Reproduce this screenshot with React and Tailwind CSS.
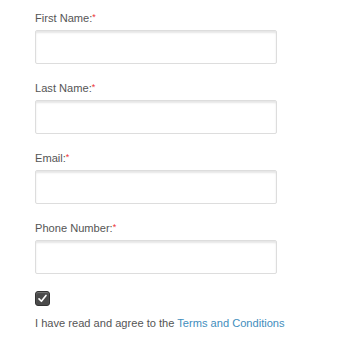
const FIELDS = ['First Name:', 'Last Name:', 'Email:', 'Phone Number:']

function Field({ label }) {
  return (
    <div className="mb-[16px]">
      <label className="block text-[11.1px] leading-[16px] text-[#555] mb-[4px]">
        {label}
        <span className="text-[#e33] text-[9px] align-top relative top-[-1px]">*</span>
      </label>
      <input
        type="text"
        className="block w-[242px] h-[34px] bg-white border border-[#ddd] rounded-[2px] shadow-[inset_0_2px_2px_rgba(0,0,0,0.1)] outline-none"
      />
    </div>
  )
}

export default function App() {
  return (
    <div
      className="w-[348px] h-[348px] bg-white pl-[35px] pt-[10px]"
      style={{ fontFamily: '"Liberation Sans", Arial, sans-serif' }}
    >
      {FIELDS.map((f) => (
        <Field key={f} label={f} />
      ))}

      <div className="pt-[1px]">
        <span className="flex items-center justify-center w-[15px] h-[15px] rounded-[3px] bg-[#4a4a4a] border border-[#333] shadow-[inset_0_1px_1px_rgba(255,255,255,0.25)]">
          <svg className="w-[11px] h-[11px]" viewBox="0 0 12 12" fill="none">
            <path d="M2.2 6.4 L4.8 9 L9.8 2.6" stroke="white" strokeWidth="1.8" strokeLinecap="round" strokeLinejoin="round" />
          </svg>
        </span>
      </div>

      <p className="mt-[9px] text-[11.1px] leading-[16px] text-[#555]">
        I have read and agree to the{' '}
        <a href="#" className="text-[#3f8ebd]">Terms and Conditions</a>
      </p>
    </div>
  )
}
